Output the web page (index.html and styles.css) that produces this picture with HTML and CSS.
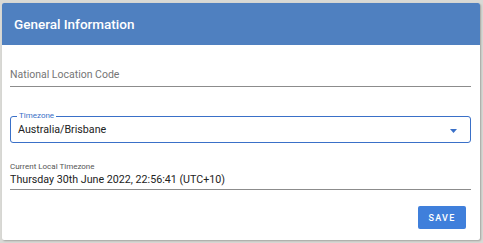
FILE: index.html
```
<html>
<head>
	<title>General Information</title>
	<meta charset="UTF-8" />
	<link rel="stylesheet" href="styles.css">
</head>
<body>
<div class="card">
	<div class="card-header">General Information</div>
	<div class="card-body">
		<div class="field field-plain">
			<span class="placeholder">National Location Code</span>
		</div>
		<div class="field field-outlined">
			<span class="outline-label">Timezone</span>
			<span class="value">Australia/Brisbane</span>
			<svg class="caret" width="7" height="4" viewBox="0 0 7 4"><path d="M0 0 L7 0 L3.5 4 Z" fill="#3a70c8"/></svg>
		</div>
		<div class="field field-readonly">
			<span class="small-label">Current Local Timezone</span>
			<span class="value">Thursday 30th June 2022, 22:56:41 (UTC+10)</span>
		</div>
		<div class="actions">
			<button class="btn">SAVE</button>
		</div>
	</div>
</div>
</body>
</html>
```
FILE: styles.css
```
body {
	margin: 0;
	background: #d9d9d5;
	font-family: Roboto, "Liberation Sans", Arial, sans-serif;
	width: 483px;
	height: 243px;
	overflow: hidden;
}

.card {
	margin: 3px 0 0 2px;
	width: 478px;
	height: 237px;
	background: #fff;
	box-shadow: 1px 1px 2px rgba(0, 0, 0, 0.25);
	border-radius: 2px;
	overflow: hidden;
}

.card-header {
	height: 42px;
	background: #4f80c0;
	color: #fff;
	font-size: 13.5px;
	font-weight: 500;
	padding-left: 12px;
	line-height: 43px;
}

.card-body {
	padding: 0 9px 0 8px;
}

.field {
	position: relative;
}

.field-plain {
	margin-top: 19px;
	height: 22px;
	border-bottom: 1px solid #8c8c8c;
}

.placeholder {
	font-size: 10.5px;
	color: #757575;
	line-height: 22px;
}

.field-outlined {
	margin-top: 29px;
	height: 25px;
	border: 1px solid #3a70c8;
	border-radius: 3px;
	padding-left: 7px;
	display: flex;
	align-items: center;
}

.outline-label {
	position: absolute;
	top: -6px;
	left: 6px;
	padding: 0 2px;
	background: #fff;
	font-size: 8px;
	line-height: 10px;
	color: #3a70c8;
}

.value {
	font-size: 10.7px;
	color: #222;
}

.caret {
	margin-left: auto;
	margin-right: 13px;
	margin-top: 2px;
}

.field-readonly {
	margin-top: 18px;
	display: flex;
	flex-direction: column;
	border-bottom: 1px solid #8c8c8c;
	padding-bottom: 2px;
}

.small-label {
	font-size: 8px;
	color: #555;
	line-height: 11px;
}

.field-readonly .value {
	line-height: 15px;
}

.actions {
	display: flex;
	justify-content: flex-end;
	margin-top: 16px;
	padding-right: 5px;
}

.btn {
	background: #3f7fdb;
	color: #fff;
	border: none;
	border-radius: 2px;
	font-family: Roboto, "Liberation Sans", Arial, sans-serif;
	font-size: 9px;
	font-weight: 500;
	letter-spacing: 1.3px;
	width: 48px;
	height: 23px;
	padding: 0;
}
```
